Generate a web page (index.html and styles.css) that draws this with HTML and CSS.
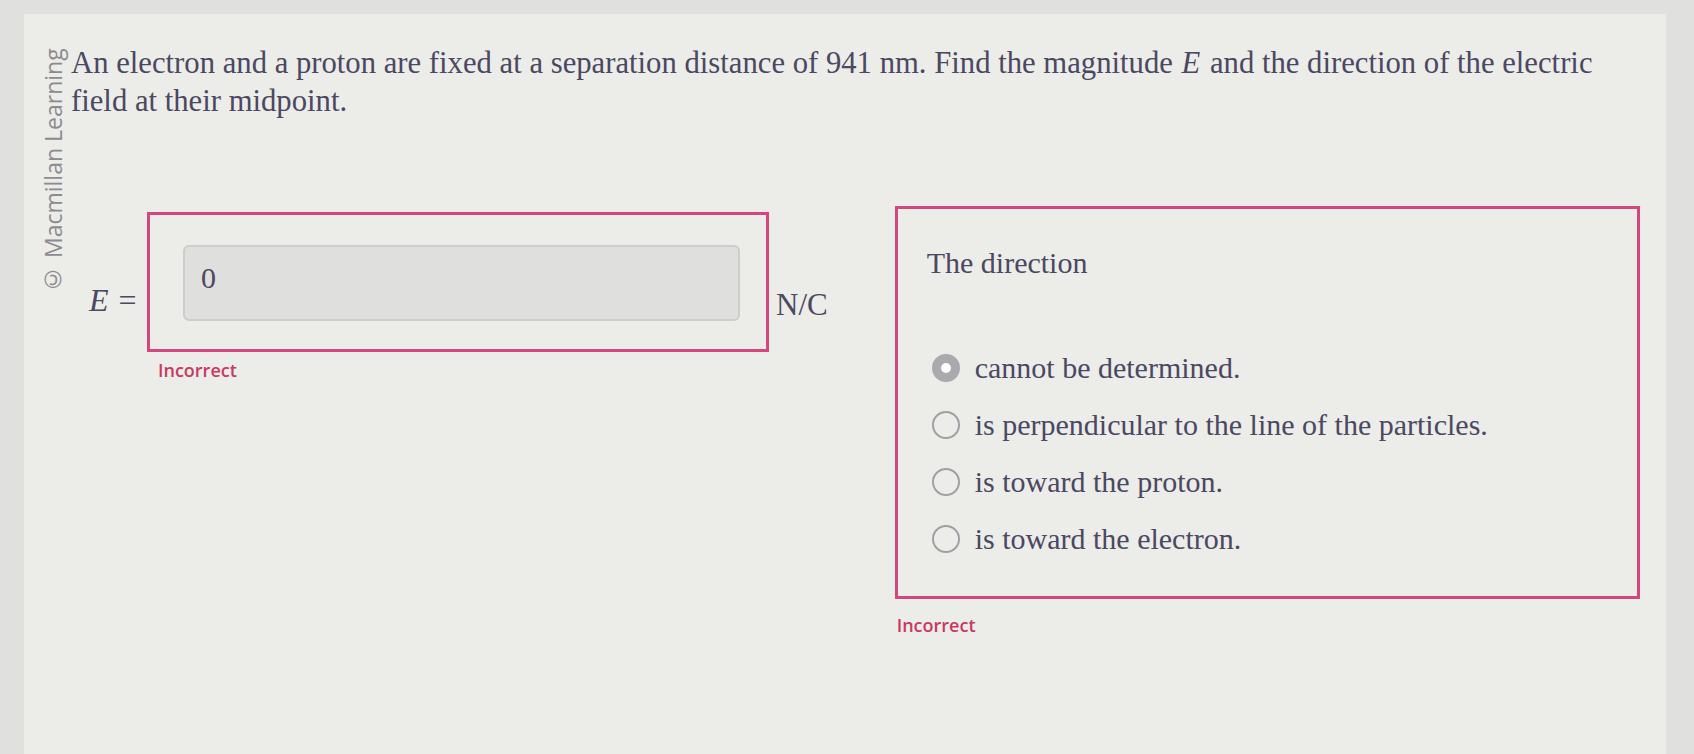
FILE: index.html
```html
<!DOCTYPE html>
<html lang="en">
<head>
<meta charset="utf-8">
<title>Electric field question</title>
<link rel="stylesheet" href="styles.css">
</head>
<body>
<div class="frame">
  <div class="card">
    <div class="watermark">© Macmillan Learning</div>
    <div class="content">
      <p class="question">An electron and a proton are fixed at a separation distance of 941 nm. Find the magnitude <i class="var">E</i> and the direction of the electric<br>field at their midpoint.</p>
      <div class="answers">
        <div class="part part-e">
          <div class="eq-row">
            <span class="label"><i>E</i> =</span>
            <div class="answer-box box-e">
              <div class="input">0</div>
            </div>
            <span class="unit">N/C</span>
          </div>
          <div class="feedback fb-e">Incorrect</div>
        </div>
        <div class="part part-dir">
          <div class="answer-box box-dir">
            <div class="prompt">The direction</div>
            <ul class="options">
              <li class="option"><span class="radio selected"></span>cannot be determined.</li>
              <li class="option"><span class="radio"></span>is perpendicular to the line of the particles.</li>
              <li class="option"><span class="radio"></span>is toward the proton.</li>
              <li class="option"><span class="radio"></span>is toward the electron.</li>
            </ul>
          </div>
          <div class="feedback fb-dir">Incorrect</div>
        </div>
      </div>
    </div>
  </div>
</div>
</body>
</html>
```
FILE: styles.css
```css
html, body {
  margin: 0;
  padding: 0;
  background: #e0e0de;
  height: 100%;
  overflow: hidden;
}
.frame {
  padding: 14px 28px 0 24px;
  height: 100%;
  box-sizing: border-box;
}
.card {
  background: #ecece9;
  height: 100%;
  display: flex;
  color: #4b4862;
  font-family: "Liberation Serif", "Times New Roman", serif;
}
.watermark {
  writing-mode: vertical-rl;
  transform: rotate(180deg);
  font-family: "Open Sans", "Noto Sans", sans-serif;
  font-size: 23px;
  color: #8c8b90;
  width: 26px;
  margin-left: 16px;
  margin-top: 30px;
  height: 252px;
  line-height: 26px;
  white-space: nowrap;
  text-align: left;
}
.content {
  padding-left: 5px;
  flex: 1;
}
.question {
  margin: 30px 0 0 0;
  font-size: 30.7px;
  line-height: 38px;
}
.var {
  padding: 0 2px 0 1px;
}
.answers {
  display: flex;
  align-items: flex-start;
  margin-top: 86px;
}
.part-e {
  margin-left: 18px;
  margin-top: 6px;
}
.eq-row {
  display: flex;
  align-items: flex-end;
}
.label {
  font-size: 32px;
  line-height: 32px;
  margin-bottom: 36px;
  width: 58px;
  word-spacing: 2px;
}
.answer-box {
  border: 3px solid #d4467f;
  box-sizing: border-box;
}
.box-e {
  width: 622px;
  height: 140px;
  padding: 30px 26px 0 33px;
}
.input {
  height: 76px;
  background: #dfdfdd;
  border: 2px solid #cdcdcb;
  border-radius: 6px;
  box-sizing: border-box;
  font-size: 30px;
  padding: 16px 0 0 16px;
  line-height: 30px;
}
.unit {
  font-size: 31px;
  line-height: 31px;
  margin-left: 7px;
  margin-bottom: 32px;
}
.feedback {
  font-family: "Open Sans", "Noto Sans", sans-serif;
  font-weight: 600;
  font-size: 18px;
  color: #c63a63;
}
.fb-e {
  margin-left: 69px;
  margin-top: 6px;
}
.part-dir {
  margin-left: 67px;
}
.box-dir {
  width: 745px;
  height: 393px;
  padding: 36px 0 0 29px;
}
.prompt {
  font-size: 30px;
  line-height: 36px;
}
.options {
  list-style: none;
  margin: 58px 0 0 0;
  padding: 0;
}
.option {
  display: flex;
  align-items: center;
  font-size: 30px;
  height: 57px;
  line-height: 36px;
}
.radio {
  width: 28px;
  height: 28px;
  border: 2.5px solid #a09fa4;
  border-radius: 50%;
  box-sizing: border-box;
  margin: 0 15px 0 5px;
  flex: none;
}
.radio.selected {
  border: 9px solid #aaa9ad;
  background: #ffffff;
}
.fb-dir {
  margin-left: 2px;
  margin-top: 14px;
}
```
